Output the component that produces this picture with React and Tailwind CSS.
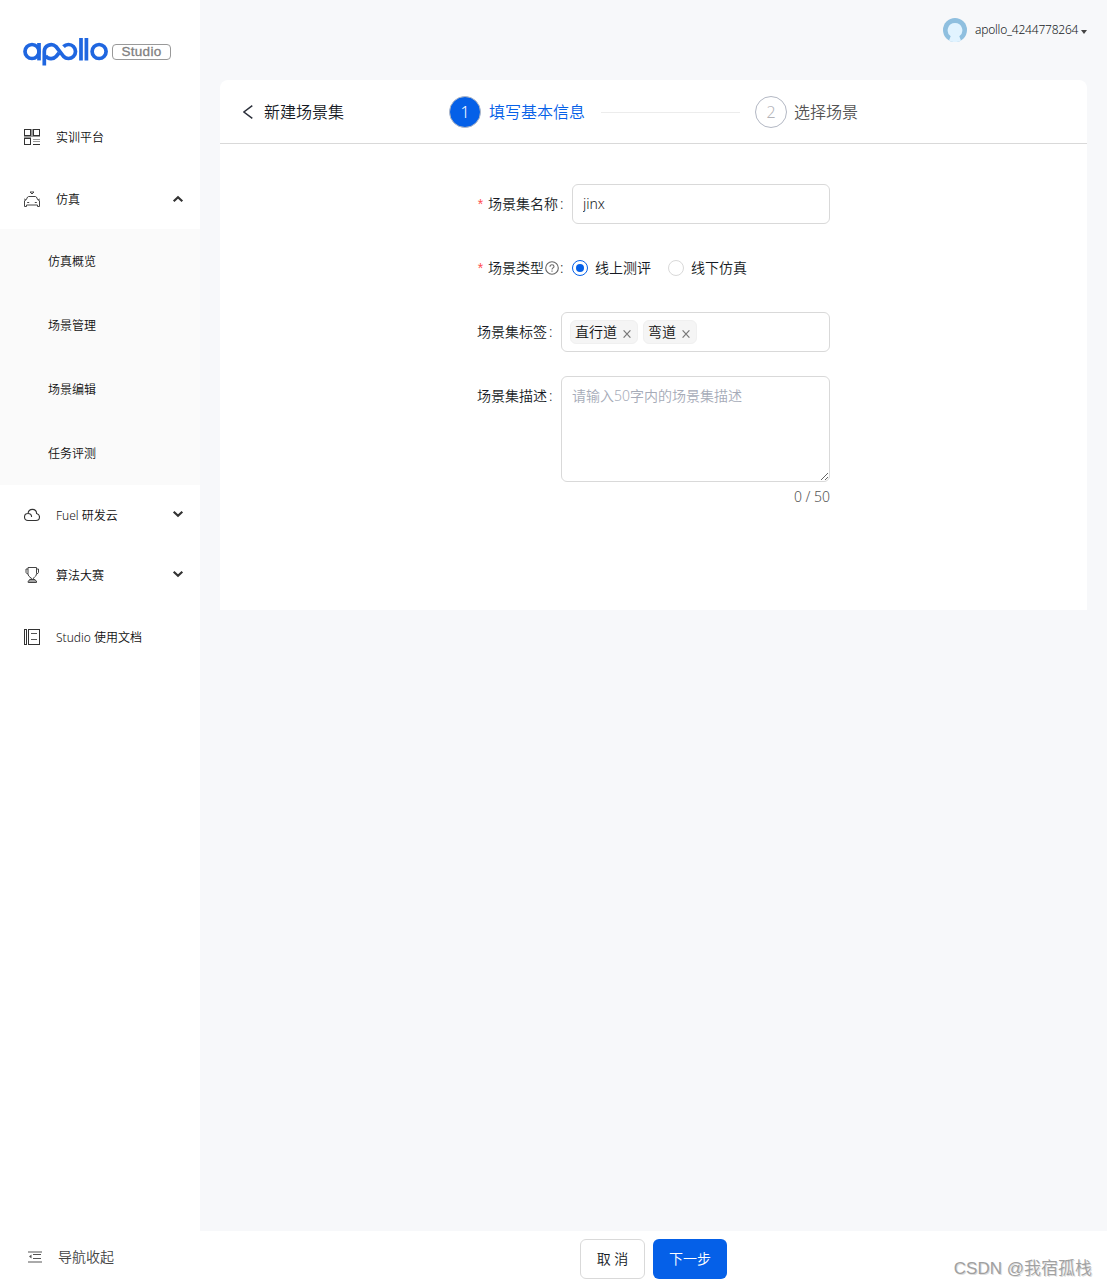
import { useState } from 'react';

const submenu = ['仿真概览', '场景管理', '场景编辑', '任务评测'];

function Logo() {
  return (
    <svg width="86" height="30" viewBox="0 0 86 30" fill="none" stroke="#1f66e0" strokeWidth="3.7">
      <circle cx="9" cy="14.5" r="7" />
      <path d="M16 6v17.4" />
      <path d="M21.3 28.5V14.5a6.9 6.9 0 0 1 11.7-4.9L40.5 19.4a7 7 0 1 0 0-9.8" />
      <path d="M22.5 18.8a7 7 0 0 0 10.8.4l2.7-3.2" />
      <path d="M58 1v22.4M63.4 1v22.4" />
      <circle cx="76.1" cy="14.5" r="7" />
    </svg>
  );
}

function GridIcon() {
  return (
    <svg width="16" height="16" viewBox="0 0 16 16" fill="none" shapeRendering="crispEdges">
      <path d="M7.5 0v7M8.5 0v7M0 7.5h16M0 8.5h7" stroke="#999" />
      <path d="M.5 .5h6v6h-6zM9.5 .5h6v6h-6zM.5 9.5h6v6h-6z" stroke="#333" />
      <path d="M9 10.5h7M9 12.5h7" stroke="#999" />
      <path d="M9 15.5h7" stroke="#333" />
    </svg>
  );
}

function CarIcon() {
  return (
    <svg width="16" height="16" viewBox="0 0 16 16" fill="none" stroke="#444" strokeWidth="1">
      <path d="M6 1h4L8 3z" />
      <path d="M2.2 8.8 3.6 6q.3-.5 1-.5h6.8q.7 0 1 .5l1.400 2.800 1.700.9v5.800h-2v-1.500H2.500v1.500h-2V9.700z" />
      <path d="M.2 8l1.600.8M15.800 8l-1.600.8M3.200 11.500h2M10.800 11.500h2" />
    </svg>
  );
}

function CloudIcon() {
  return (
    <svg width="16" height="16" viewBox="0 0 16 16" fill="none" stroke="#333" strokeWidth="1.1">
      <path d="M4.1 6.5C4.3 4 6 2.4 8.4 2.4c2.3 0 4.1 1.7 4.2 4.1 1.8.4 2.9 1.7 2.9 3.5 0 2-1.5 3.5-3.5 3.5H4C2 13.5.5 12 .5 10s1.5-3.5 3.5-3.5c2.2 0 3.6 1.500 3.600 3.600" />
    </svg>
  );
}

function TrophyIcon() {
  return (
    <svg width="16" height="16" viewBox="0 0 16 16" fill="none" stroke="#444" strokeWidth="1">
      <path d="M4 .5h8.500v6c0 2.200-1.500 3.700-3.200 4.500v1.500h-2V11C5.500 10.200 4 8.700 4 6.500z" />
      <path d="M4 2H2v3.400q0 1 2 1.600M12.500 2h2v3.400q0 1-2 1.600" />
      <path d="M5.500 12.500h5.500l.5 1.300M5.500 12.500 5 13.800M4.200 14h8.300v1.500H4.200z" />
    </svg>
  );
}

function DocIcon() {
  return (
    <svg width="16" height="16" viewBox="0 0 16 16" fill="none" stroke="#333" shapeRendering="crispEdges">
      <path d="M.5.5h2v15h-2zM4.500.5h11v15h-11z" />
      <path d="M7 4.500h6M7 10.500h6" stroke="#555" />
    </svg>
  );
}

function CollapseIcon() {
  return (
    <svg width="14" height="12" viewBox="0 0 14 12" shapeRendering="crispEdges">
      <path d="M0 0h14v2H0zM0 10h14v2H0z" fill="#aaa" />
      <path d="M5 3h8v1H5zM5 7h8v1H5z" fill="#555" />
      <path d="M1 5.500 3.500 3.500v4z" fill="#555" shapeRendering="auto" />
    </svg>
  );
}

function Chevron({ up }) {
  return (
    <svg className={`ml-auto mr-4 ${up ? 'rotate-180' : '-translate-y-px'}`} width="12" height="8" viewBox="0 0 12 8" fill="none" stroke="#333" strokeWidth="2.2">
      <path d="M1.700 1.800 6 5.800l4.300-4" />
    </svg>
  );
}

function NavItem({ icon: Icon, label, tall, arrow }) {
  return (
    <a className={`flex items-center pl-6 text-xs text-[#111] ${tall ? 'h-16' : 'h-15'}`}>
      <Icon />
      <span className="ml-4 pt-0.5">{label}</span>
      {arrow && <Chevron up={arrow === 'up'} />}
    </a>
  );
}

function Label({ required, children }) {
  return (
    <label className="flex h-10 shrink-0 items-center whitespace-nowrap">
      {required && <span className="mr-1 w-[7px] text-center font-['Liberation_Sans',sans-serif] text-[#ff4d4f]">*</span>}
      {children}
      <span className="ml-[2px] mr-[9px] w-[3px]">:</span>
    </label>
  );
}

function Radio({ label, checked, onChange }) {
  return (
    <button className="flex items-center" onClick={onChange}>
      <span className={`flex size-4 items-center justify-center rounded-full border ${checked ? 'border-[#0560e8]' : 'border-[#d9d9d9]'}`}>
        {checked && <span className="size-2 rounded-full bg-[#0560e8]" />}
      </span>
      <span className="ml-[7px] mr-2">{label}</span>
    </button>
  );
}

function Tag({ children }) {
  return (
    <span className="flex h-6 items-center rounded-md border border-[#f0f0f0] bg-[#f5f5f5] pl-1 pr-1.5 text-[#111]">
      {children}
      <svg className="ml-[6px] mt-[3px]" width="8" height="8" viewBox="0 0 8 8" stroke="#777" strokeWidth="1.1">
        <path d="M.6.3l6.800 7.400M7.400.3.6 7.700" />
      </svg>
    </span>
  );
}

export default function App() {
  const [type, setType] = useState('online');

  return (
    <div className="flex h-[1287px] w-[1107px] flex-col overflow-hidden bg-white font-['Noto_Sans','Noto_Sans_CJK_SC',sans-serif] text-sm font-[350] text-[#161a24]">
      <div className="flex h-[1231px]">
        {/* Sidebar */}
        <aside className="w-[200px] bg-white">
          <div className="flex h-[105px] pl-[23px] pt-[37px]">
            <Logo />
            <span className="ml-[3px] mt-[7px] flex h-4 w-[59px] items-center justify-center rounded border border-[#999] font-['Liberation_Sans',sans-serif] text-[13.5px] tracking-[0.3px] text-[#808080] [-webkit-text-stroke:0.3px_#808080]">
              Studio
            </span>
          </div>
          <nav>
            <NavItem icon={GridIcon} label="实训平台" tall />
            <NavItem icon={CarIcon} label="仿真" arrow="up" />
            <div className="bg-[#fafafa]">
              {submenu.map((label) => (
                <a key={label} className="flex h-16 items-center pl-12 pt-0.5 text-xs text-[#111]">{label}</a>
              ))}
            </div>
            <NavItem icon={CloudIcon} label="Fuel 研发云" arrow="down" />
            <NavItem icon={TrophyIcon} label="算法大赛" arrow="down" />
            <NavItem icon={DocIcon} label="Studio 使用文档" tall />
          </nav>
        </aside>

        {/* Main content */}
        <main className="flex-1 bg-[#f7f8fa] px-5">
          <header className="flex h-20 items-start justify-end pt-[18px]">
            <div className="flex h-6 items-center text-xs">
              <svg width="24" height="24" viewBox="0 0 24 24">
                <circle cx="12" cy="12" r="12" fill="#8fbfdf" />
                <path d="M12 5a7.3 7.3 0 0 1 4.3 13.200l1.700 4.200a12 12 0 0 1-12 0l1.700-4.200A7.300 7.300 0 0 1 12 5z" fill="#e1f3ff" />
              </svg>
              <span className="ml-2 w-[103px] whitespace-nowrap tracking-[-0.22px]">apollo_4244778264</span>
              <svg className="ml-[3px] mt-[3px]" width="6" height="4" viewBox="0 0 6 4" fill="#444">
                <path d="M0 0h6L3 4z" />
              </svg>
            </div>
          </header>

          <section className="h-[530px] rounded-t-lg bg-white">
            <div className="flex h-16 items-center border-b border-[#d9d9d9] text-base">
              <svg className="ml-[23px]" width="10" height="14" viewBox="0 0 10 14" fill="none" stroke="#2b2f3a" strokeWidth="1.5">
                <path d="M9.300.7.900 7l8.400 6.300" />
              </svg>
              <span className="ml-[11px] w-[185px]">新建场景集</span>
              <span className="flex size-8 items-center justify-center rounded-full border border-[#b3b8c4] bg-[#0560e8] text-white">1</span>
              <span className="ml-2 text-[#0560e8]">填写基本信息</span>
              <span className="ml-4 mt-px h-px w-[139px] bg-[#ececec]" />
              <span className="ml-[15px] flex size-8 items-center justify-center rounded-full border border-[#b3b8c4] text-[#b3b3b8]">2</span>
              <span className="ml-[7px] text-[#555]">选择场景</span>
            </div>

            <form className="ml-[257px] flex w-[353px] flex-col gap-6 pt-10" onSubmit={(e) => e.preventDefault()}>
              <div className="flex">
                <Label required>场景集名称</Label>
                <input className="h-10 min-w-0 flex-1 rounded-md border border-[#d9d9d9] px-[10px] pb-0.5 outline-none" defaultValue="jinx" />
              </div>
              <div className="flex">
                <Label required>
                  场景类型
                  <svg className="ml-px -mr-px" width="14" height="14" viewBox="0 0 14 14" fill="none" stroke="#666" strokeWidth="1.1">
                    <circle cx="7" cy="7" r="6.300" />
                    <path d="M5 5.700C5 4.400 5.800 3.700 7 3.700s2 .7 2 1.800C9 6.900 7 6.900 7 8.500M7 9.500v1.200" />
                  </svg>
                </Label>
                <div className="flex items-center gap-[9px]">
                  <Radio label="线上测评" checked={type === 'online'} onChange={() => setType('online')} />
                  <Radio label="线下仿真" checked={type === 'offline'} onChange={() => setType('offline')} />
                </div>
              </div>
              <div className="flex">
                <Label>场景集标签</Label>
                <div className="flex h-10 flex-1 items-center gap-[5px] rounded-md border border-[#d9d9d9] px-2">
                  <Tag>直行道</Tag>
                  <Tag>弯道</Tag>
                </div>
              </div>
              <div className="flex">
                <Label>场景集描述</Label>
                <div className="flex-1">
                  <textarea
                    className="block h-[106px] w-full rounded-md border border-[#d9d9d9] px-[10px] py-[9px] outline-none placeholder:text-[#a6abb8]"
                    placeholder="请输入50字内的场景集描述"
                  />
                  <div className="mt-[5px] text-right text-[#555]">0 / 50</div>
                </div>
              </div>
            </form>
          </section>
        </main>
      </div>

      {/* Footer */}
      <footer className="flex h-14 items-start pt-2">
        <div className="flex h-9 w-[580px] items-center pl-7 text-[#444]">
          <CollapseIcon />
          <span className="ml-4">导航收起</span>
        </div>
        <button className="h-10 w-[65px] rounded-md border border-[#d9d9d9]">取 消</button>
        <button className="ml-2 h-10 w-[74px] rounded-md bg-[#0560e8] text-white">下一步</button>
        <span className="ml-auto mr-[15px] mt-[18px] font-['Liberation_Sans','Noto_Sans_CJK_SC',sans-serif] text-[17px] leading-6 text-[#a0a0a0] [text-shadow:1px_1px_0_#ddd]">
          CSDN @我宿孤栈
        </span>
      </footer>
    </div>
  );
}
